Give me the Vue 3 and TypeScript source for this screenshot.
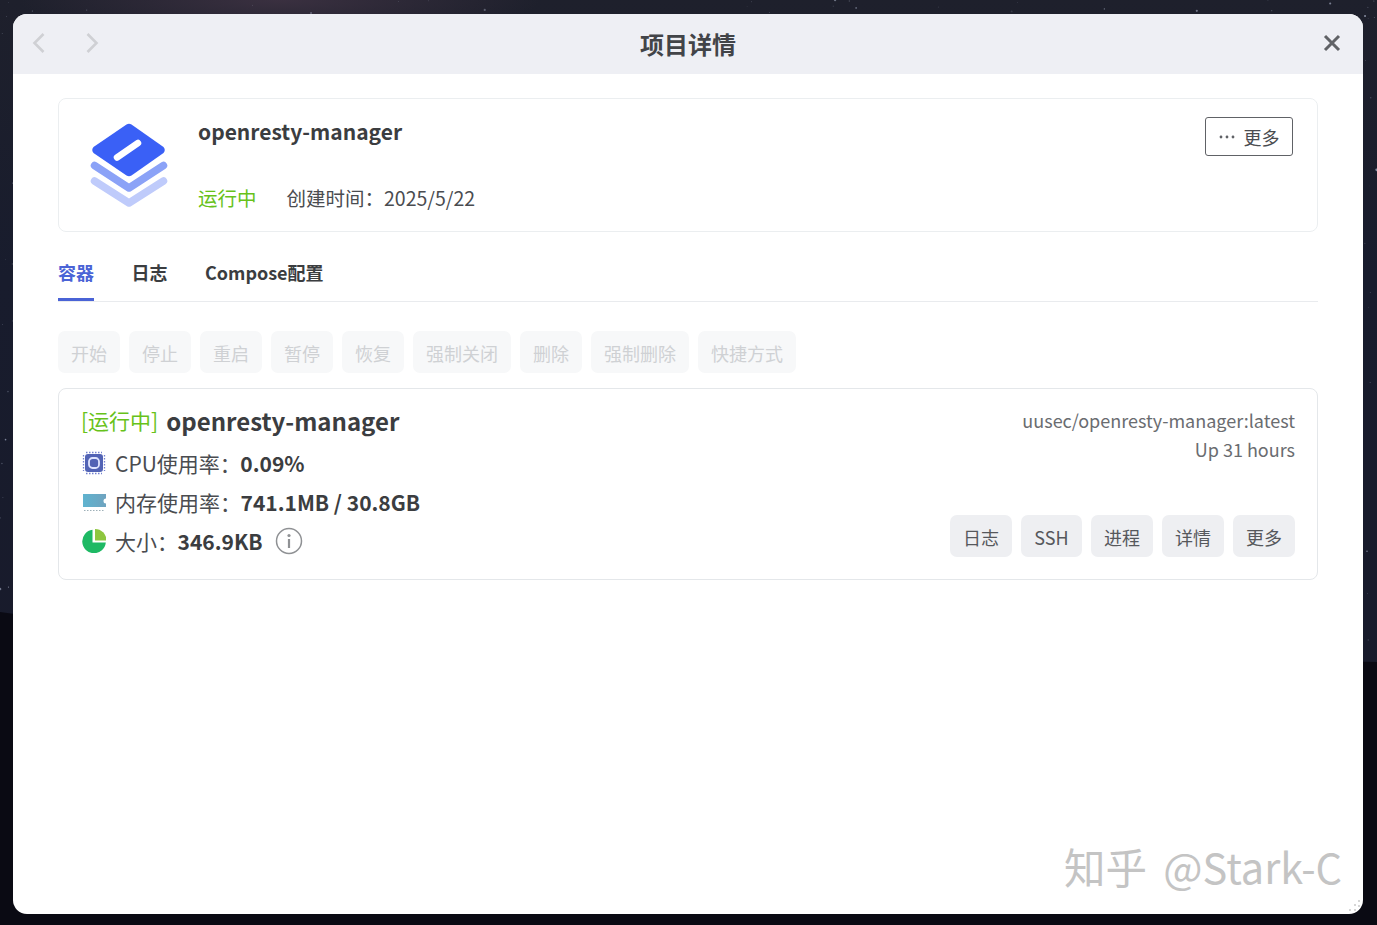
<script setup lang="ts">
const seeded = (n: number) => {
  let s = 7;
  const r = () => ((s = (s * 16807) % 2147483647) / 2147483647);
  return Array.from({ length: n }, () => {
    const y = r() * 640;
    return { x: r() * 1377, y, a: 0.12 + r() * 0.5, rad: 0.35 + r() * r() * 1.1 };
  });
};
const stars = seeded(1300);
const disabledActions = ['开始', '停止', '重启', '暂停', '恢复', '强制关闭', '删除', '强制删除', '快捷方式'];
const rowActions = ['日志', 'SSH', '进程', '详情', '更多'];
</script>

<template>
  <div class="desktop">
    <svg class="sky" width="1377" height="925" viewBox="0 0 1377 925">
      <circle v-for="(s, i) in stars" :key="i" :cx="s.x" :cy="s.y" :r="s.rad" fill="#cfd8f0" :opacity="s.a" />
      <path d="M0 612 200 640 700 650 1377 662V925H0Z" fill="#0a0a13" />
    </svg>
    <div class="window">
      <header class="head">
        <div class="nav">
          <svg width="16" height="22" viewBox="0 0 16 22"><path d="M12.500 2 3.500 11l9 9" fill="none" stroke="#cfd0d4" stroke-width="2.600" /></svg>
          <svg width="16" height="22" viewBox="0 0 16 22"><path d="m3.500 2 9 9-9 9" fill="none" stroke="#cfd0d4" stroke-width="2.600" /></svg>
        </div>
        <h1 class="title">项目详情</h1>
        <svg class="close" width="18" height="18" viewBox="0 0 18 18"><path d="M2 2l14 14M16 2 2 16" stroke="#606266" stroke-width="3" /></svg>
      </header>

      <main class="body">
        <section class="summary">
          <svg class="logo" width="80" height="86" viewBox="0 0 80 86">
            <path d="M38.500 1.500Q41 0 43.500 1.500L75.500 24Q78 27 75.500 30L43.500 52.500Q41 54 38.500 52.500L5.500 30Q3 27 5.500 24Z" fill="#3a60f6" />
            <path d="M29 34.500 50 20" stroke="#fff" stroke-width="6.500" stroke-linecap="round" />
            <path d="M6.500 42.500 41 65 75.500 42.500" fill="none" stroke="#8ba2f7" stroke-width="7.500" stroke-linecap="round" stroke-linejoin="round" />
            <path d="M6.500 58 41 80 75.500 58" fill="none" stroke="#bfcbfb" stroke-width="7.500" stroke-linecap="round" stroke-linejoin="round" />
          </svg>
          <div class="summary-text">
            <div class="app-name">openresty-manager</div>
            <div class="meta"><span class="running">运行中</span><span class="created">创建时间：2025/5/22</span></div>
          </div>
          <button class="more-btn">
            <svg class="dots" width="16" height="4" viewBox="0 0 16 4"><g fill="#606266"><circle cx="2" cy="2" r="1.400" /><circle cx="8" cy="2" r="1.400" /><circle cx="14" cy="2" r="1.400" /></g></svg>
            <span>更多</span>
          </button>
        </section>

        <nav class="tabs">
          <span class="tab active">容器</span>
          <span class="tab">日志</span>
          <span class="tab">Compose配置</span>
        </nav>

        <div class="actions">
          <span v-for="a in disabledActions" :key="a" class="act disabled">{{ a }}</span>
        </div>

        <section class="container-card">
          <div class="left">
            <div class="c-title"><span class="c-status">[运行中]</span><span class="c-name">openresty-manager</span></div>
            <div class="stat">
              <svg width="24" height="24" viewBox="0 0 24 24">
                <path d="M1.500 4v16M22.500 4v16M4 1.500h16M4 22.500h16" stroke="#7482d0" stroke-width="1.300" stroke-dasharray="1.500 1.500" fill="none" />
                <rect x="3" y="3" width="18" height="18" rx="3" fill="#5263b5" />
                <rect x="7" y="7" width="10" height="10" rx="3.500" fill="none" stroke="#dfe4ff" stroke-width="1.800" />
              </svg>
              <span>CPU使用率：</span><b>0.09%</b>
            </div>
            <div class="stat">
              <svg width="24" height="24" viewBox="0 0 24 24">
                <defs>
                  <linearGradient id="ramFill" x1="0" y1="0" x2="1" y2="0">
                    <stop offset="0" stop-color="#5fb3cf" />
                    <stop offset="1" stop-color="#6fa3bf" />
                  </linearGradient>
                </defs>
                <path d="M1 4h23v4.500a2.500 2.500 0 0 0 0 5V17H1Z" fill="url(#ramFill)" />
                <path d="M2 20.500h21" stroke="#9eb0b8" stroke-width="1" stroke-dasharray="1.500 1.500" />
              </svg>
              <span>内存使用率：</span><b>741.1MB / 30.8GB</b>
            </div>
            <div class="stat">
              <svg width="24" height="24" viewBox="0 0 24 24">
                <path d="M10.500 0.700A11.800 11.800 0 1 0 23.800 13.500H10.500Z" fill="#1eb964" />
                <path d="M13 0A11.500 11.500 0 0 1 24.500 11.500H13Z" fill="#8ec63f" />
              </svg>
              <span>大小：</span><b>346.9KB</b>
              <svg class="info" width="28" height="28" viewBox="0 0 28 28">
                <circle cx="14" cy="14" r="12.500" fill="none" stroke="#8f9194" stroke-width="1.500" />
                <circle cx="14" cy="8.500" r="1.600" fill="#8f9194" />
                <path d="M14 12v9" stroke="#8f9194" stroke-width="2.200" />
              </svg>
            </div>
          </div>
          <div class="right">
            <div class="r-text">uusec/openresty-manager:latest</div>
            <div class="r-text">Up 31 hours</div>
            <div class="row-actions">
              <span v-for="a in rowActions" :key="a" class="act">{{ a }}</span>
            </div>
          </div>
        </section>
      </main>

      <div class="watermark">知乎 @Stark-C</div>
      <svg class="grip" width="14" height="14" viewBox="0 0 14 14">
        <g fill="#c8c8c8"><circle cx="12" cy="2" r="1" /><circle cx="8" cy="6" r="1" /><circle cx="12" cy="7" r="1" /><circle cx="3" cy="11" r="1" /><circle cx="8" cy="11" r="1" /></g>
      </svg>
    </div>
  </div>
</template>

<style>
html, body { margin: 0; background: #0a0a13; }
</style>

<style scoped>
.desktop {
  position: relative;
  width: 1377px;
  height: 925px;
  overflow: hidden;
  padding: 14px 14px 0 13px;
  box-sizing: border-box;
  background:
    radial-gradient(ellipse 260px 40px at 280px 0, #3a3040 0, transparent 100%),
    linear-gradient(180deg, #1e202c 0, #181c2d 30%, #181a2a 100%);
  font-family: "Noto Sans CJK SC", "Noto Sans", sans-serif;
  color: #303133;
}
.sky { position: absolute; inset: 0; }
.window {
  position: relative;
  width: 1350px;
  height: 900px;
  background: #fff;
  border-radius: 14px;
  overflow: hidden;
}
.head {
  position: relative;
  height: 60px;
  background: #eeeff4;
  display: flex;
  align-items: center;
  justify-content: center;
}
.nav { position: absolute; left: 18px; top: 18px; display: flex; gap: 37px; }
.nav svg { display: block; }
.title { margin: 0; font-size: 24px; line-height: 60px; font-weight: 700; color: #424448; }
.close { position: absolute; right: 22px; top: 20px; }
.body { padding: 24px 45px 0; }
.summary {
  height: 134px;
  box-sizing: border-box;
  border: 1px solid #ebeef0;
  border-radius: 8px;
  display: flex;
  position: relative;
  padding: 24px 24px 0 29px;
}
.logo { display: block; flex: none; }
.summary-text { margin-left: 30px; margin-top: -8px; flex: 1; }
.app-name { font-size: 21px; line-height: 32px; font-weight: 700; color: #3b3d40; }
.meta { margin-top: 36px; display: flex; font-size: 19.500px; line-height: 30px; }
.running { color: #67c21a; }
.created { margin-left: 30px; color: #4a4c50; }
.more-btn {
  position: absolute;
  right: 24px;
  top: 18px;
  width: 88px;
  height: 39px;
  border: 1px solid #606266;
  border-radius: 3px;
  background: #fff;
  font: 18px "Noto Sans CJK SC", sans-serif;
  color: #4a4c50;
  display: flex;
  align-items: center;
  justify-content: center;
  padding: 0;
  white-space: nowrap;
}
.dots { display: block; margin-right: 9px; }
.tabs {
  margin-top: 21px;
  height: 48px;
  border-bottom: 1px solid #e9ebee;
  display: flex;
  gap: 37.500px;
  margin-bottom: 29px;
}
.tab {
  font-size: 18px;
  line-height: 38px;
  height: 46px;
  font-weight: 700;
  color: #3b3d40;
}
.tab.active { color: #4a63d6; border-bottom: 3px solid #4a63d6; height: 45px; }
.actions { display: flex; gap: 9px; }
.act {
  display: inline-flex;
  align-items: center;
  justify-content: center;
  box-sizing: border-box;
  height: 42px;
  min-width: 61px;
  padding: 1px 13px 0;
  border-radius: 7px;
  background: #eeeff2;
  font-size: 18px;
  color: #56585c;
}
.act.disabled { background: #f7f8f9; color: #cfd1d4; }
.container-card {
  margin-top: 15px;
  height: 192px;
  box-sizing: border-box;
  border: 1px solid #e4e7ea;
  border-radius: 8px;
  padding: 14px 22px 0 23px;
  display: flex;
  justify-content: space-between;
}
.c-title { display: flex; align-items: center; height: 38px; margin-top: -2px; margin-bottom: 4px; margin-left: -1px; }
.c-status { font-size: 21px; color: #67c21a; margin-right: 8px; }
.c-name { font-size: 24px; font-weight: 700; color: #3b3d40; }
.stat {
  display: flex;
  align-items: center;
  height: 39px;
  font-size: 21px;
  color: #4a4c50;
}
.stat > svg:first-child { margin-right: 9px; flex: none; }
.stat b { font-weight: 700; color: #3b3d40; margin-left: -0.500px; }
.info { margin-left: 12px; }
.right { display: flex; flex-direction: column; align-items: flex-end; }
.r-text { font-size: 18px; line-height: 29px; color: #6a6c70; }
.r-text:first-child { margin-top: 3px; }
.row-actions { display: flex; gap: 9px; margin-top: 51px; }
.watermark {
  position: absolute;
  left: 1051px;
  top: 823px;
  font-size: 41.500px;
  line-height: 58px;
  word-spacing: 7px;
  color: #c4c4c4;
  white-space: nowrap;
}
.grip { position: absolute; right: 2px; bottom: 1px; }
</style>
